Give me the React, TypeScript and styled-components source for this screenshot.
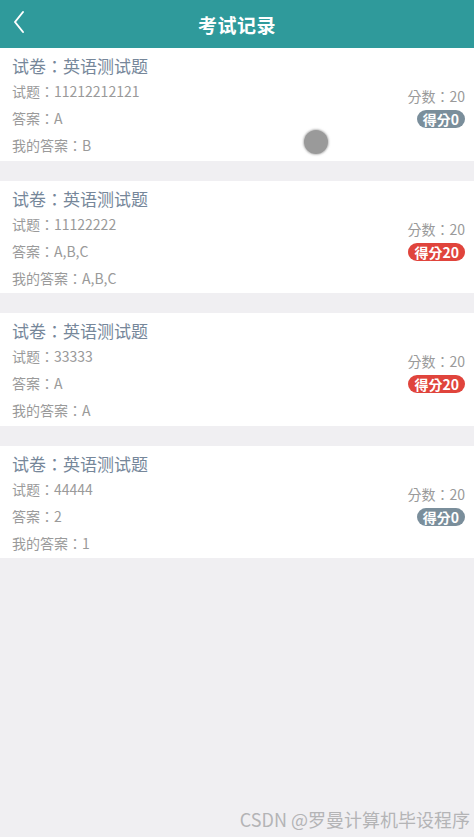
import styled, { createGlobalStyle } from 'styled-components';

interface Record {
  paper: string,
  question: string,
  answer: string,
  mine: string,
  total: number,
  score: number
}

const records: Record[] = [
  {paper: '英语测试题', question: '11212212121', answer: 'A', mine: 'B', total: 20, score: 0},
  {paper: '英语测试题', question: '11122222', answer: 'A,B,C', mine: 'A,B,C', total: 20, score: 20},
  {paper: '英语测试题', question: '33333', answer: 'A', mine: 'A', total: 20, score: 20},
  {paper: '英语测试题', question: '44444', answer: '2', mine: '1', total: 20, score: 0},
]

export default function App() {
  return (
    <>
      <GlobalStyle />
      <Page>
        <Header>
          <BackButton>
            <svg width="16" height="24" viewBox="0 0 16 24" fill="none">
              <path d="M12 2 L4 12 L12 22" stroke="#fff" strokeWidth="2" strokeLinecap="round" strokeLinejoin="round" />
            </svg>
          </BackButton>
          <Title>考试记录</Title>
        </Header>
        <List>
          {
            records.map((r, index) => {
              return (
                <Card key={index}>
                  <Info>
                    <PaperName>试卷：{r.paper}</PaperName>
                    <Line>试题：{r.question}</Line>
                    <Line>答案：{r.answer}</Line>
                    <Line>我的答案：{r.mine}</Line>
                  </Info>
                  <Side>
                    <Total>分数：{r.total}</Total>
                    <Badge $passed={r.score > 0}>得分{r.score}</Badge>
                  </Side>
                </Card>
              )
            })
          }
        </List>
        <TouchDot />
        <Watermark>CSDN @罗曼计算机毕设程序</Watermark>
      </Page>
    </>
  )
}

const GlobalStyle = createGlobalStyle`
  html, body {
    margin: 0;
    padding: 0;
    background: #f0eff2;
    font-family: "Noto Sans CJK TC", "Noto Sans CJK SC", "Liberation Sans", sans-serif;
  }
`

const Page = styled.div`
  position: relative;
  width: 474px;
  min-height: 837px;
  background: #f0eff2;
  overflow: hidden;
`

const Header = styled.header`
  position: relative;
  height: 48px;
  background: #2f9a9b;
  display: flex;
  align-items: center;
  justify-content: center;
`

const BackButton = styled.div`
  position: absolute;
  left: 11px;
  top: 10px;
  display: flex;
`

const Title = styled.h1`
  margin: 0;
  color: #fff;
  font-size: 19px;
  font-weight: bold;
  letter-spacing: 0.5px;
`

const List = styled.div`
  display: flex;
  flex-direction: column;
  gap: 20px;
`

const Card = styled.div`
  display: flex;
  align-items: center;
  background: #fff;
  padding: 6px 9px 1.5px 12px;
`

const Info = styled.div`
  flex: 1;
  display: flex;
  flex-direction: column;
`

const PaperName = styled.div`
  font-size: 17px;
  line-height: 24px;
  color: #76879a;
`

const Line = styled.div`
  font-size: 14px;
  line-height: 27px;
  color: #9a9a9a;
`

const Side = styled.div`
  display: flex;
  flex-direction: column;
  align-items: flex-end;
  gap: 5px;
  padding-top: 2px;
`

const Total = styled.div`
  font-size: 14px;
  line-height: 18px;
  color: #9a9a9a;
`

const Badge = styled.span<{ $passed: boolean }>`
  display: inline-block;
  padding: 0 6px;
  height: 18px;
  line-height: 18px;
  border-radius: 9px;
  font-size: 14px;
  font-weight: bold;
  color: #fff;
  background: ${p => p.$passed ? '#e0443c' : '#7a8e9b'};
`

const TouchDot = styled.div`
  position: absolute;
  left: 304px;
  top: 130px;
  width: 24px;
  height: 24px;
  border-radius: 50%;
  background: #9a9a9a;
  box-shadow: 0 0 2px 1px rgba(150, 150, 150, 0.6);
`

const Watermark = styled.div`
  position: absolute;
  right: 4px;
  bottom: 5px;
  font-size: 18px;
  color: #b4b4b6;
`
